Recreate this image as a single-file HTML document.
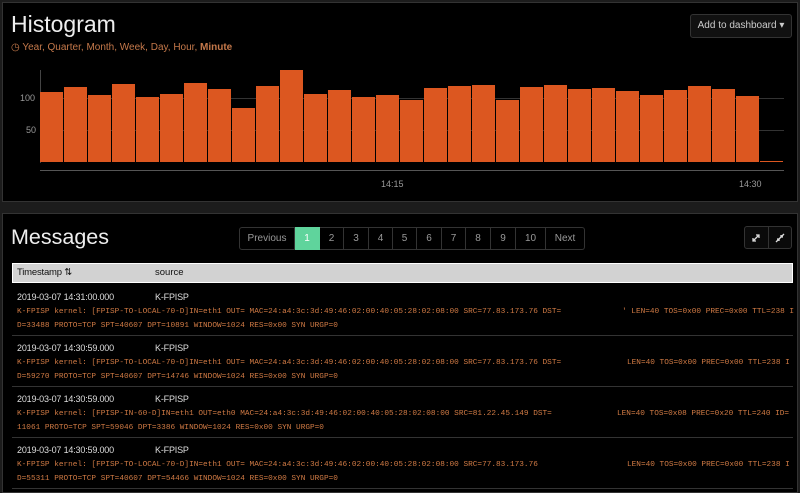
<!DOCTYPE html>
<html><head><meta charset="utf-8"><style>
*{margin:0;padding:0;box-sizing:border-box}
body{width:800px;height:490px;background:#1c1c1c;position:relative;overflow:hidden;font-family:"Liberation Sans",sans-serif}
.p{position:absolute;background:#000;border:1px solid #333}
.a{position:absolute;white-space:nowrap}
.bar{position:absolute;background:#dc5720;bottom:0}
.mono{font-family:"Liberation Mono",monospace;font-size:7.75px;color:#d07a44;position:absolute;white-space:pre}
.ts{font-size:9.6px;color:#ddd;position:absolute;letter-spacing:-0.2px;transform:scaleX(0.94);transform-origin:left}
.sep{position:absolute;left:12px;width:781px;height:1px;background:#333}
.pg{position:absolute;top:227px;height:23px;border:1px solid #333;border-left:none;color:#999;font-size:10px;line-height:21px;text-align:center}
</style></head><body>
<div class="p" style="left:2px;top:2px;width:796px;height:200px"></div>
<div class="a" style="left:11px;top:11px;font-size:23px;color:#eee">Histogram</div>
<div class="a" style="left:11px;top:42px;font-size:10px;color:#c4784a">&#9719; Year, Quarter, Month, Week, Day, Hour, <b>Minute</b></div>
<div class="a" style="left:690px;top:14px;width:102px;height:24px;border:1px solid #333;border-radius:3px;background:#111;color:#ccc;font-size:10px;line-height:22px;text-align:center">Add to dashboard &#9662;</div>
<div class="a" style="left:40px;top:98px;width:744px;height:1px;background:#333"></div>
<div class="a" style="left:40px;top:130px;width:744px;height:1px;background:#333"></div>
<div class="a" style="left:40px;top:70px;width:1px;height:93px;background:#444"></div>
<div class="a" style="left:40px;top:170px;width:744px;height:1px;background:#555"></div>
<div class="a" style="left:20px;top:93px;font-size:9px;color:#999">100</div>
<div class="a" style="left:26px;top:125px;font-size:9px;color:#999">50</div>
<div class="a" style="left:381px;top:179px;font-size:9px;color:#999">14:15</div>
<div class="a" style="left:739px;top:179px;font-size:9px;color:#999">14:30</div>
<div class="a" style="left:0;top:0;width:800px;height:162px">
<div class="bar" style="left:40px;width:23px;height:70px"></div>
<div class="bar" style="left:64px;width:23px;height:75px"></div>
<div class="bar" style="left:88px;width:23px;height:67px"></div>
<div class="bar" style="left:112px;width:23px;height:78px"></div>
<div class="bar" style="left:136px;width:23px;height:65px"></div>
<div class="bar" style="left:160px;width:23px;height:68px"></div>
<div class="bar" style="left:184px;width:23px;height:79px"></div>
<div class="bar" style="left:208px;width:23px;height:73px"></div>
<div class="bar" style="left:232px;width:23px;height:54px"></div>
<div class="bar" style="left:256px;width:23px;height:76px"></div>
<div class="bar" style="left:280px;width:23px;height:92px"></div>
<div class="bar" style="left:304px;width:23px;height:68px"></div>
<div class="bar" style="left:328px;width:23px;height:72px"></div>
<div class="bar" style="left:352px;width:23px;height:65px"></div>
<div class="bar" style="left:376px;width:23px;height:67px"></div>
<div class="bar" style="left:400px;width:23px;height:62px"></div>
<div class="bar" style="left:424px;width:23px;height:74px"></div>
<div class="bar" style="left:448px;width:23px;height:76px"></div>
<div class="bar" style="left:472px;width:23px;height:77px"></div>
<div class="bar" style="left:496px;width:23px;height:62px"></div>
<div class="bar" style="left:520px;width:23px;height:75px"></div>
<div class="bar" style="left:544px;width:23px;height:77px"></div>
<div class="bar" style="left:568px;width:23px;height:73px"></div>
<div class="bar" style="left:592px;width:23px;height:74px"></div>
<div class="bar" style="left:616px;width:23px;height:71px"></div>
<div class="bar" style="left:640px;width:23px;height:67px"></div>
<div class="bar" style="left:664px;width:23px;height:72px"></div>
<div class="bar" style="left:688px;width:23px;height:76px"></div>
<div class="bar" style="left:712px;width:23px;height:73px"></div>
<div class="bar" style="left:736px;width:23px;height:66px"></div>
<div class="bar" style="left:760px;width:23px;height:1px"></div>
</div>

<div class="p" style="left:2px;top:213px;width:796px;height:280px"></div>
<div class="a" style="left:11px;top:225px;font-size:21.5px;color:#eee">Messages</div>
<div class="pg" style="left:239px;width:56px;border-left:1px solid #333;border-radius:3px 0 0 3px">Previous</div>
<div class="pg" style="left:295px;width:25px;background:#5fd49c;border-color:#5fd49c;color:#fff">1</div>
<div class="pg" style="left:320px;width:24px">2</div>
<div class="pg" style="left:344px;width:25px">3</div>
<div class="pg" style="left:369px;width:24px">4</div>
<div class="pg" style="left:393px;width:24px">5</div>
<div class="pg" style="left:417px;width:25px">6</div>
<div class="pg" style="left:442px;width:24px">7</div>
<div class="pg" style="left:466px;width:25px">8</div>
<div class="pg" style="left:491px;width:25px">9</div>
<div class="pg" style="left:516px;width:30px">10</div>
<div class="pg" style="left:546px;width:39px;border-radius:0 3px 3px 0">Next</div>
<div class="a" style="left:744px;top:226px;width:48px;height:23px;border:1px solid #333;border-radius:3px;background:#0a0a0a"></div>
<div class="a" style="left:768px;top:226px;width:1px;height:23px;background:#333"></div>
<svg class="a" style="left:750px;top:232px" width="12" height="12" viewBox="0 0 12 12"><path d="M3 9L9 3M6 3H9V6M3 6V9H6" stroke="#ddd" stroke-width="1.3" fill="none"/></svg>
<svg class="a" style="left:774px;top:232px" width="12" height="12" viewBox="0 0 12 12"><path d="M2 10L10 2M5 7V9M5 7H3M7 5V3M7 5H9" stroke="#ddd" stroke-width="1.3" fill="none"/></svg>
<div class="a" style="left:12px;top:263px;width:781px;height:20px;background:#d2d2d2;border:1px solid #fff"></div>
<div class="a" style="left:17px;top:267px;font-size:9.5px;color:#111;letter-spacing:-0.2px">Timestamp &#8645;</div>
<div class="a" style="left:155px;top:267px;font-size:9.5px;color:#111">source</div>

<div class="ts" style="left:17px;top:292px">2019-03-07 14:31:00.000</div><div class="ts" style="left:155px;top:292px">K-FPISP</div>
<div class="mono" style="left:17px;top:308px">K-FPISP kernel: [FPISP-TO-LOCAL-70-D]IN=eth1 OUT= MAC=24:a4:3c:3d:49:46:02:00:40:05:28:02:08:00 SRC=77.83.173.76 DST=</div>
<div class="mono" style="left:622px;top:308px">' LEN=40 TOS=0x00 PREC=0x00 TTL=238 I</div>
<div class="mono" style="left:17px;top:322px">D=33488 PROTO=TCP SPT=40607 DPT=10891 WINDOW=1024 RES=0x00 SYN URGP=0</div>
<div class="sep" style="top:335px"></div>

<div class="ts" style="left:17px;top:343px">2019-03-07 14:30:59.000</div><div class="ts" style="left:155px;top:343px">K-FPISP</div>
<div class="mono" style="left:17px;top:359px">K-FPISP kernel: [FPISP-TO-LOCAL-70-D]IN=eth1 OUT= MAC=24:a4:3c:3d:49:46:02:00:40:05:28:02:08:00 SRC=77.83.173.76 DST=</div>
<div class="mono" style="left:627px;top:359px">LEN=40 TOS=0x00 PREC=0x00 TTL=238 I</div>
<div class="mono" style="left:17px;top:373px">D=59270 PROTO=TCP SPT=40607 DPT=14746 WINDOW=1024 RES=0x00 SYN URGP=0</div>
<div class="sep" style="top:386px"></div>

<div class="ts" style="left:17px;top:394px">2019-03-07 14:30:59.000</div><div class="ts" style="left:155px;top:394px">K-FPISP</div>
<div class="mono" style="left:17px;top:410px">K-FPISP kernel: [FPISP-IN-60-D]IN=eth1 OUT=eth0 MAC=24:a4:3c:3d:49:46:02:00:40:05:28:02:08:00 SRC=81.22.45.149 DST=</div>
<div class="mono" style="left:617px;top:410px">LEN=40 TOS=0x08 PREC=0x20 TTL=240 ID=</div>
<div class="mono" style="left:17px;top:424px">11061 PROTO=TCP SPT=59046 DPT=3386 WINDOW=1024 RES=0x00 SYN URGP=0</div>
<div class="sep" style="top:437px"></div>

<div class="ts" style="left:17px;top:445px">2019-03-07 14:30:59.000</div><div class="ts" style="left:155px;top:445px">K-FPISP</div>
<div class="mono" style="left:17px;top:461px">K-FPISP kernel: [FPISP-TO-LOCAL-70-D]IN=eth1 OUT= MAC=24:a4:3c:3d:49:46:02:00:40:05:28:02:08:00 SRC=77.83.173.76</div>
<div class="mono" style="left:627px;top:461px">LEN=40 TOS=0x00 PREC=0x00 TTL=238 I</div>
<div class="mono" style="left:17px;top:475px">D=55311 PROTO=TCP SPT=40607 DPT=54466 WINDOW=1024 RES=0x00 SYN URGP=0</div>
<div class="sep" style="top:488px"></div>
</body></html>
